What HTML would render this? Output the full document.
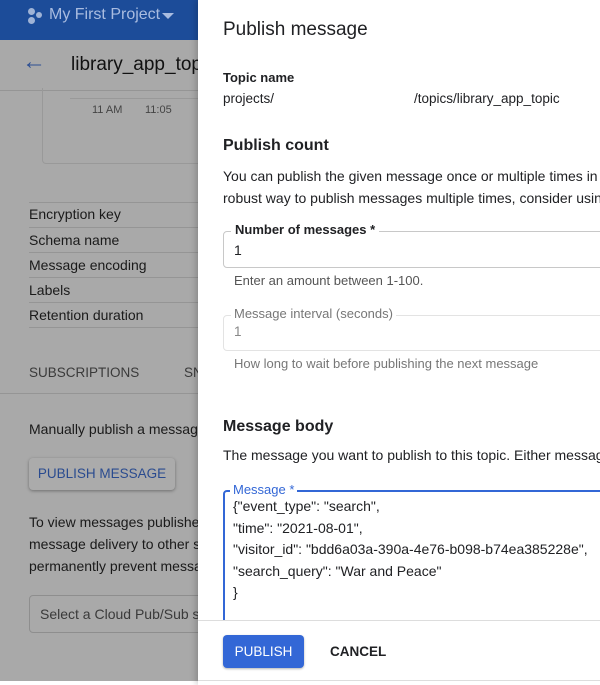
<!DOCTYPE html>
<html><head><style>
*{margin:0;padding:0;box-sizing:border-box}
body{width:600px;height:685px;overflow:hidden;position:relative;font-family:"Liberation Sans",sans-serif;background:#a9a9a9;color:#111}
.a{position:absolute;white-space:nowrap}
.l{color:#1a1a1a;font-size:14px}
.hr{position:absolute;height:1px;background:#959595}
.r{color:#202124}
</style></head><body>
<div class="a" style="left:0;top:0;width:200px;height:40px;background:#1c4c99"></div>
<div class="a" style="left:28px;top:8px;width:7px;height:7px;border-radius:50%;background:#9fb3d6"></div>
<div class="a" style="left:36px;top:12px;width:6px;height:6px;border-radius:50%;background:#9fb3d6"></div>
<div class="a" style="left:28px;top:17px;width:7px;height:7px;border-radius:50%;background:#9fb3d6"></div>
<div class="a" style="left:49px;top:6px;font-size:16px;color:#a9bce0">My First Project</div>
<div class="a" style="left:162px;top:13px;width:0;height:0;border-left:6px solid transparent;border-right:6px solid transparent;border-top:6px solid #a9bce0"></div>
<div class="a" style="left:22px;top:50px;font-size:24px;color:#2d4f93;line-height:24px">&#8592;</div>
<div class="a" style="left:71px;top:54px;font-size:19px;color:#111">library_app_topic</div>
<div class="hr" style="left:0;top:90px;width:200px"></div>
<div class="a" style="left:42px;top:88px;width:170px;height:76px;border:1px solid #999;border-top:none;border-radius:0 0 4px 4px"></div>
<div class="hr" style="left:70px;top:98px;width:130px;background:#999"></div>
<div class="a" style="left:92px;top:104px;font-size:11px;color:#444">11 AM</div>
<div class="a" style="left:145px;top:104px;font-size:11px;color:#444">11:05</div>
<div class="hr" style="left:29px;top:202px;width:170px"></div>
<div class="a l" style="left:29px;top:206px">Encryption key</div>
<div class="hr" style="left:29px;top:227px;width:170px"></div>
<div class="a l" style="left:29px;top:232px">Schema name</div>
<div class="hr" style="left:29px;top:252px;width:170px"></div>
<div class="a l" style="left:29px;top:257px">Message encoding</div>
<div class="hr" style="left:29px;top:277px;width:170px"></div>
<div class="a l" style="left:29px;top:282px">Labels</div>
<div class="hr" style="left:29px;top:302px;width:170px"></div>
<div class="a l" style="left:29px;top:307px">Retention duration</div>
<div class="hr" style="left:29px;top:327px;width:170px"></div>
<div class="a" style="left:29px;top:365px;font-size:13.5px;color:#3a3a3a">SUBSCRIPTIONS</div>
<div class="a" style="left:184px;top:365px;font-size:13.5px;color:#3a3a3a">SN</div>
<div class="hr" style="left:0;top:393px;width:200px"></div>
<div class="a l" style="left:29px;top:421px">Manually publish a message</div>
<div class="a" style="left:29px;top:458px;width:146px;height:32px;border-radius:4px;background:#ababab;box-shadow:0 1px 3px rgba(0,0,0,.35);color:#2a4b8f;font-size:13.5px;text-align:center;line-height:32px">PUBLISH MESSAGE</div>
<div class="a l" style="left:29px;top:511px;line-height:22px">To view messages published<br>message delivery to other su<br>permanently prevent messa</div>
<div class="a" style="left:29px;top:595px;width:180px;height:38px;border:1px solid #8e8e8e;border-radius:4px;font-size:14px;color:#3a3a3a;padding:10px 0 0 10px">Select a Cloud Pub/Sub su</div>
<div class="a" style="left:0;top:681px;width:200px;height:4px;background:#fff"></div>
<div class="a" style="left:198px;top:0;width:402px;height:685px;background:#fff;box-shadow:-2px 0 6px rgba(0,0,0,.2)"></div>
<div class="a r" style="left:223px;top:19px;font-size:19px">Publish message</div>
<div class="a r" style="left:223px;top:70px;font-size:13px;font-weight:bold">Topic name</div>
<div class="a r" style="left:223px;top:91px;font-size:13.5px">projects/</div>
<div class="a r" style="left:414px;top:91px;font-size:13.5px">/topics/library_app_topic</div>
<div class="a r" style="left:223px;top:137px;font-size:16px;font-weight:bold">Publish count</div>
<div class="a r" style="left:223px;top:165px;font-size:14px;line-height:22px">You can publish the given message once or multiple times in a<br>robust way to publish messages multiple times, consider using</div>
<div class="a" style="left:223px;top:231px;width:390px;height:37px;border:1px solid #c8c8c8;border-radius:4px"></div>
<div class="a r" style="left:231px;top:222px;background:#fff;padding:0 4px;font-size:13px;font-weight:bold">Number of messages *</div>
<div class="a r" style="left:234px;top:242px;font-size:14px">1</div>
<div class="a" style="left:234px;top:273px;font-size:13px;color:#555">Enter an amount between 1-100.</div>
<div class="a" style="left:223px;top:315px;width:390px;height:36px;border:1px solid #e3e3e3;border-radius:4px"></div>
<div class="a" style="left:231px;top:306px;background:#fff;padding:0 3px;font-size:13px;color:#777">Message interval (seconds)</div>
<div class="a" style="left:234px;top:324px;font-size:13.5px;color:#888">1</div>
<div class="a" style="left:234px;top:356px;font-size:13px;color:#777">How long to wait before publishing the next message</div>
<div class="a r" style="left:223px;top:418px;font-size:16px;font-weight:bold">Message body</div>
<div class="a r" style="left:223px;top:447px;font-size:14px">The message you want to publish to this topic. Either message</div>
<div class="a" style="left:223px;top:490px;width:390px;height:140px;border:2px solid #3367d6;border-radius:4px 0 0 0"></div>
<div class="a" style="left:230px;top:482px;background:#fff;padding:0 3px;font-size:13px;color:#3367d6">Message *</div>
<div class="a r" style="left:233px;top:496px;font-size:14px;line-height:21.5px">{"event_type": "search",<br>"time": "2021-08-01",<br>"visitor_id": "bdd6a03a-390a-4e76-b098-b74ea385228e",<br>"search_query": "War and Peace"<br>}</div>
<div class="a" style="left:198px;top:620px;width:402px;height:65px;background:#fff;border-top:1px solid #ddd"></div>
<div class="a" style="left:223px;top:635px;width:81px;height:33px;border-radius:4px;background:#3367d6;color:#fff;font-size:13.5px;font-weight:500;text-align:center;line-height:33px;box-shadow:0 1px 2px rgba(0,0,0,.3)">PUBLISH</div>
<div class="a r" style="left:330px;top:644px;font-size:13.5px;font-weight:bold">CANCEL</div>
<div class="a" style="left:198px;top:680px;width:402px;height:1px;background:#ddd"></div>
</body></html>
